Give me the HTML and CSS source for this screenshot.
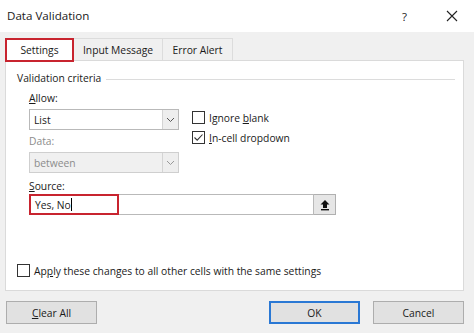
FILE: index.html
```html
<!DOCTYPE html>
<html lang="en">
<head>
    <meta charset="UTF-8">
    <meta name="viewport" content="width=device-width, initial-scale=1.0">
    <title>Data Validation</title>
    <link rel="stylesheet" href="styles.css">
</head>
<body>
    <div class="dialog">
        <div class="titlebar">
            <span class="title">Data Validation</span>
            <span class="help">?</span>
            <span class="close">
                <svg width="12" height="12" viewBox="0 0 12 12"><path d="M1 1L11 11M11 1L1 11" stroke="#222" stroke-width="1.1" fill="none"/></svg>
            </span>
        </div>
        <div class="body">
            <div class="tabs">
                <div class="tab active">Settings</div>
                <div class="tab">Input Message</div>
                <div class="tab">Error Alert</div>
            </div>
            <div class="panel">
                <div class="group-head">
                    <span>Validation criteria</span>
                    <div class="rule"></div>
                </div>
                <div class="row">
                    <div class="col">
                        <label class="lbl"><u>A</u>llow:</label>
                        <div class="select">
                            <span class="value">List</span>
                            <span class="arrow"><svg width="9" height="6" viewBox="0 0 9 6"><path d="M1 1L4.5 4.5L8 1" stroke="#555" fill="none"/></svg></span>
                        </div>
                        <label class="lbl muted">Data:</label>
                        <div class="select disabled">
                            <span class="value">between</span>
                            <span class="arrow"><svg width="9" height="6" viewBox="0 0 9 6"><path d="M1 1L4.5 4.5L8 1" stroke="#999" fill="none"/></svg></span>
                        </div>
                    </div>
                    <div class="checks">
                        <div class="check"><span class="box"></span><span>Ignore <u>b</u>lank</span></div>
                        <div class="check"><span class="box"><svg width="11" height="11" viewBox="0 0 11 11"><path d="M1.5 5.5L4.2 8.2L9.5 2.5" stroke="#333" stroke-width="1.1" fill="none"/></svg></span><span><u>I</u>n-cell dropdown</span></div>
                    </div>
                </div>
                <label class="lbl source-lbl"><u>S</u>ource:</label>
                <div class="source">
                    <div class="source-field">
                        <span class="hl">Yes, No<span class="caret"></span></span>
                    </div>
                    <span class="pick"><svg width="12" height="12" viewBox="0 0 12 12"><path d="M6 1L1.5 5.5H4V9H8V5.5H10.5Z" fill="#111"/><rect x="2" y="10" width="8" height="1.4" fill="#111"/></svg></span>
                </div>
                <div class="apply check"><span class="box"></span><span>Ap<u>p</u>ly these changes to all other cells with the same settings</span></div>
            </div>
            <div class="buttons">
                <button class="btn"><u>C</u>lear All</button>
                <div class="spacer"></div>
                <button class="btn default">OK</button>
                <button class="btn">Cancel</button>
            </div>
        </div>
    </div>
</body>
</html>
```

FILE: styles.css
```css
*{
    margin: 0;
    padding: 0;
    box-sizing: border-box;
}
body{
    background-color: #f0f0f0;
    font-family: "Open Sans", "Noto Sans", sans-serif;
    font-size: 10.3px;
    color: #1a1a1a;
}
u{
    text-decoration: underline;
    text-underline-offset: 1px;
}
.dialog{
    width: 474px;
    height: 333px;
    background-color: #f0f0f0;
}
.titlebar{
    height: 32px;
    background-color: #fff;
    display: flex;
    align-items: center;
    padding: 0 16px 0 7px;
}
.title{
    font-size: 11.6px;
    flex: 1;
    margin-top: -1px;
}
.help{
    font-size: 11.5px;
    width: 44px;
    color: #222;
}
.close{
    width: 12px;
    display: flex;
    align-items: center;
}
.body{
    padding: 6px 10px 0 5px;
}
.tabs{
    display: flex;
    height: 22px;
}
.tab{
    height: 22px;
    padding: 0 4px;
    display: flex;
    align-items: center;
    justify-content: center;
    white-space: nowrap;
    border: 1px solid #dcdcdc;
    border-bottom: none;
    border-left: none;
    background-color: #f0f0f0;
}
.tab:nth-child(2){
    width: 89px;
}
.tab:nth-child(3){
    width: 70px;
}
.tab.active{
    width: 69px;
    background-color: #fff;
    border: 2px solid #c8242f;
    height: 24px;
    margin-bottom: -2px;
    position: relative;
    z-index: 1;
}
.panel{
    background-color: #fff;
    border: 1px solid #dadada;
    height: 231px;
    padding: 10px 0 0 11px;
}
.group-head{
    display: flex;
    align-items: center;
    gap: 5px;
    padding-right: 8px;
}
.rule{
    flex: 1;
    height: 1px;
    background-color: #dcdcdc;
    margin-top: 2px;
}
.row{
    display: flex;
    gap: 13px;
    margin-top: 5px;
    padding-left: 12px;
}
.col{
    display: flex;
    flex-direction: column;
    width: 150px;
    flex-shrink: 0;
}
.lbl{
    display: block;
    height: 17px;
    line-height: 17px;
}
.muted{
    color: #8c8c8c;
}
.select{
    height: 21px;
    border: 1px solid #b9b9b9;
    display: flex;
    align-items: stretch;
    margin-top: 2px;
    margin-bottom: 3px;
}
.select .value{
    flex: 1;
    padding-left: 4px;
    display: flex;
    align-items: center;
}
.select .arrow{
    width: 16px;
    border-left: 1px solid #d4d4d4;
    background-color: #eeeeee;
    display: flex;
    align-items: center;
    justify-content: center;
}
.select.disabled{
    background-color: #f0f0f0;
    border-color: #cfcfcf;
    color: #8c8c8c;
}
.checks{
    display: flex;
    flex-direction: column;
    gap: 7px;
    padding-top: 21px;
}
.check{
    display: flex;
    align-items: center;
    gap: 4px;
    height: 13px;
    white-space: nowrap;
}
.box{
    width: 13px;
    height: 13px;
    flex-shrink: 0;
    border: 1px solid #333;
    background-color: #fff;
    display: flex;
    align-items: center;
    justify-content: center;
}
.source-lbl{
    padding-left: 12px;
    margin-top: 2px;
}
.source{
    display: flex;
    margin-left: 12px;
    width: 307px;
    height: 21px;
    margin-top: -1px;
}
.source-field{
    flex: 1;
    border: 1px solid #b9b9b9;
    display: flex;
}
.hl{
    width: 90px;
    border: 2px solid #c8242f;
    margin: -1px;
    display: flex;
    align-items: center;
    padding-left: 4px;
}
.caret{
    width: 1px;
    height: 13px;
    background-color: #000;
}
.pick{
    width: 22px;
    border: 1px solid #b0b0b0;
    border-left: none;
    background-color: #e6e6e6;
    display: flex;
    align-items: center;
    justify-content: center;
}
.apply{
    margin-top: 49px;
}
.buttons{
    display: flex;
    gap: 13px;
    margin-top: 10px;
    padding-left: 1px;
}
.spacer{
    flex: 1;
}
.btn{
    width: 91px;
    height: 23px;
    background-color: #e1e1e1;
    border: 1px solid #adadad;
    font-family: inherit;
    font-size: 10.3px;
    color: #1a1a1a;
}
.btn.default{
    border: 2px solid #2a78d4;
}
```
